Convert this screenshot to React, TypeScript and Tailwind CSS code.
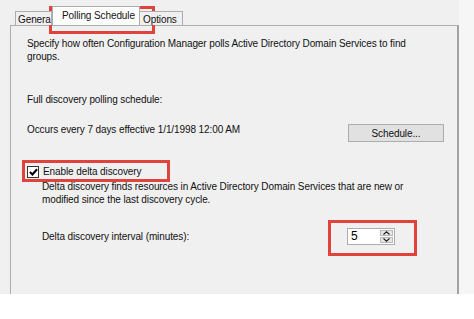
import React from "react";

const font = { fontFamily: '"Liberation Sans", Arial, sans-serif' };

function Check() {
  return (
    <div className="w-[12px] h-[12px] border border-[#333333] bg-white flex items-center justify-center">
      <svg width="9" height="8" viewBox="0 0 10 9">
        <path d="M1 4.5 L3.8 7.3 L9 1.5" fill="none" stroke="#000" strokeWidth="2.4" />
      </svg>
    </div>
  );
}

function Spinner() {
  return (
    <div className="flex w-[48px] h-[17px] border border-[#abadb3] bg-white">
      <div className="flex-1 pl-[3px] text-[12px] leading-[15px] text-black">5</div>
      <div className="w-[15px] flex flex-col gap-[1px] p-[1px]">
        <div className="flex-1 bg-[#e6e6e6] border border-[#b9b9b9] flex items-center justify-center">
          <svg width="7" height="4" viewBox="0 0 7 4">
            <path d="M0.5 3.5 L3.5 0.8 L6.5 3.5" fill="none" stroke="#222" strokeWidth="1.2" />
          </svg>
        </div>
        <div className="flex-1 bg-[#e6e6e6] border border-[#b9b9b9] flex items-center justify-center">
          <svg width="7" height="4" viewBox="0 0 7 4">
            <path d="M0.5 0.5 L3.5 3.2 L6.5 0.5" fill="none" stroke="#222" strokeWidth="1.2" />
          </svg>
        </div>
      </div>
    </div>
  );
}

export default function App() {
  return (
    <div
      className="relative w-[474px] h-[319px] bg-white overflow-hidden text-[10px] leading-[13px] tracking-[-0.1px] text-[#111]"
      style={font}
    >
      <div className="flex h-[294px]">
        <div className="w-[459px] bg-[#f0f0f0] pl-[10px] pt-[12px] flex flex-col">
          {/* tab row */}
          <div className="flex items-end h-[13px] pl-[5px] relative z-10">
            <div className="w-[37px] h-[14px] border border-b-0 border-[#adadad] bg-[#f0f0f0] pl-[2px] pt-[1px] leading-[13px] overflow-hidden whitespace-nowrap">
              Genera
            </div>
            <div className="w-[88px] h-[19px] border border-b-0 border-[#adadad] bg-white pl-[9px] pt-[2px] leading-[13px] whitespace-nowrap">
              Polling Schedule
            </div>
            <div className="w-[43px] h-[14px] border border-b-0 border-l-0 border-[#adadad] bg-[#f0f0f0] pl-[3px] pt-[1px] leading-[13px] whitespace-nowrap">
              Options
            </div>
          </div>
          {/* panel */}
          <div className="flex-1 border-l border-t border-r-2 border-[#adadad] border-r-[#a3a3a3] bg-[#f0f0f0] pl-[16px] pr-[13px] pt-[11px] flex flex-col">
            <p>Specify how often Configuration Manager polls Active Directory Domain Services to find</p>
            <p>groups.</p>
            <p className="mt-[30px]">Full discovery polling schedule:</p>
            <div className="mt-[17px] flex items-start justify-between">
              <p>Occurs every 7 days effective 1/1/1998 12:00 AM</p>
              <div className="mt-[1px] w-[96px] h-[18px] border border-[#adadad] bg-[#e1e1e1] flex items-center justify-center">
                Schedule...
              </div>
            </div>
            <div className="mt-[23px] flex items-center gap-[4px]">
              <Check />
              <span>Enable delta discovery</span>
            </div>
            <div className="pl-[15px] mt-[2px]">
              <p>Delta discovery finds resources in Active Directory Domain Services that are new or</p>
              <p>modified since the last discovery cycle.</p>
              <div className="mt-[22px] flex items-center justify-between pr-[49px]">
                <span>Delta discovery interval (minutes):</span>
                <Spinner />
              </div>
            </div>
          </div>
        </div>
        <div className="flex-1 bg-[#f6f6f6]" />
      </div>

      {/* red annotation boxes */}
      <div className="absolute left-[49px] top-[6px] w-[106px] h-[28px] border-[3px] border-[#e0423c]" />
      <div className="absolute left-[22px] top-[160px] w-[148px] h-[22px] border-[3px] border-[#e0423c]" />
      <div className="absolute left-[328px] top-[220px] w-[89px] h-[36px] border-[3px] border-[#e0423c]" />
    </div>
  );
}
